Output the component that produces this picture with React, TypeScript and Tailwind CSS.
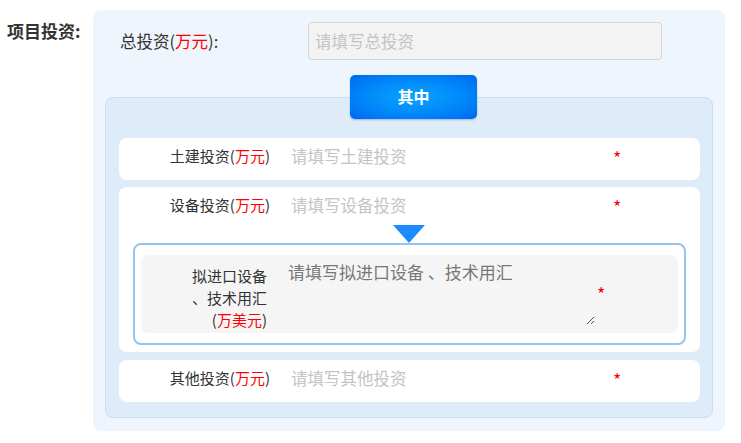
const FONT = '"Noto Sans CJK SC", "Noto Sans", sans-serif';

function Unit({ text = "万元" }: { text?: string }) {
  return (
    <>
      (<span className="text-[#ff0000]">{text}</span>)
    </>
  );
}

function Star() {
  return <span className="text-[#ff0000] text-[18px] leading-none">*</span>;
}

function SimpleRow({ label, placeholder }: { label: string; placeholder: string }) {
  return (
    <div className="flex h-[42px] items-center rounded-lg bg-white pb-[5px]">
      <div className="w-[151px] text-right text-[15px] text-[#333]">
        {label}
        <Unit />
      </div>
      <div className="ml-[21px] w-[320px] text-[16.5px] text-[#c4c4c4]">{placeholder}</div>
      <div className="ml-[2px] mt-[2px]">
        <Star />
      </div>
    </div>
  );
}

export default function App() {
  return (
    <div className="h-[443px] w-[741px] bg-white" style={{ fontFamily: FONT }}>
      <div className="flex pt-[10px]">
        <div className="w-[93px] pl-[7px] pt-[9px] text-[17px] font-bold leading-[24px] text-[#333]">
          项目投资:
        </div>

        <div className="flex w-[632px] flex-col rounded-lg bg-[#eef5fc] px-[12px] pb-[13px] pt-[12px]">
          {/* total */}
          <div className="flex items-center">
            <div className="w-[203px] pl-[15px] text-[16.5px] text-[#333]">
              总投资
              <Unit />:
            </div>
            <div className="flex h-[38px] w-[354px] items-center rounded border border-[#d6d6d6] bg-[#f3f3f3] px-[6px] text-[16.5px] text-[#c4c4c4]">
              请填写总投资
            </div>
          </div>

          <div className="relative z-10 mb-[-22px] ml-[245px] mt-[15px] flex h-[44px] w-[127px] items-center justify-center rounded-[5px] bg-[radial-gradient(ellipse_at_center,#0aa4ff_0%,#0088fa_55%,#0068ee_100%)] pb-[2px] text-[16px] font-bold text-white shadow-[0_1px_2px_rgba(0,80,200,0.3)]">
            其中
          </div>

          {/* inner */}
          <div className="flex flex-col gap-[7px] rounded-lg border border-[#c8def4] bg-[#deebf8] pb-[15px] pl-[13px] pr-[12px] pt-[40px]">
            <SimpleRow label="土建投资" placeholder="请填写土建投资" />

            <div className="flex flex-col rounded-lg bg-white pb-[7px]">
              <div className="flex h-[38px] items-center pb-[2px]">
                <div className="w-[151px] text-right text-[15px] text-[#333]">
                  设备投资
                  <Unit />
                </div>
                <div className="ml-[21px] w-[320px] text-[16.5px] text-[#c4c4c4]">请填写设备投资</div>
                <div className="ml-[2px] mt-[4px]">
                  <Star />
                </div>
              </div>
              <div className="ml-[274px] h-0 w-0 border-l-[16px] border-r-[16px] border-t-[18px] border-l-transparent border-r-transparent border-t-[#1a8cff]" />
              <div className="mx-[14px] rounded-lg border-2 border-[#96c4f2] px-[6px] py-[10px]">
                <div className="flex h-[78px] rounded-lg bg-[#f5f5f5]">
                  <div className="w-[126px] pt-[10px] text-right text-[15px] leading-[22px] text-[#333]">
                    拟进口设备
                    <br />
                    、技术用汇
                    <br />
                    <Unit text="万美元" />
                  </div>
                  <div className="relative ml-[21px] mt-[6px] h-[67px] w-[308px] text-[17px] leading-[22px] text-[#777]">
                    请填写拟进口设备 、技术用汇
                    <svg className="absolute bottom-[3px] right-[1px]" width="9" height="9" viewBox="0 0 9 9">
                      <path d="M8 1 L1 8 M8 5 L5 8" stroke="#555" strokeWidth="1" />
                    </svg>
                  </div>
                  <div className="ml-[1px] mt-[27px]">
                    <Star />
                  </div>
                </div>
              </div>
            </div>

            <div className="mt-[1px]">
              <SimpleRow label="其他投资" placeholder="请填写其他投资" />
            </div>
          </div>
        </div>
      </div>
    </div>
  );
}
